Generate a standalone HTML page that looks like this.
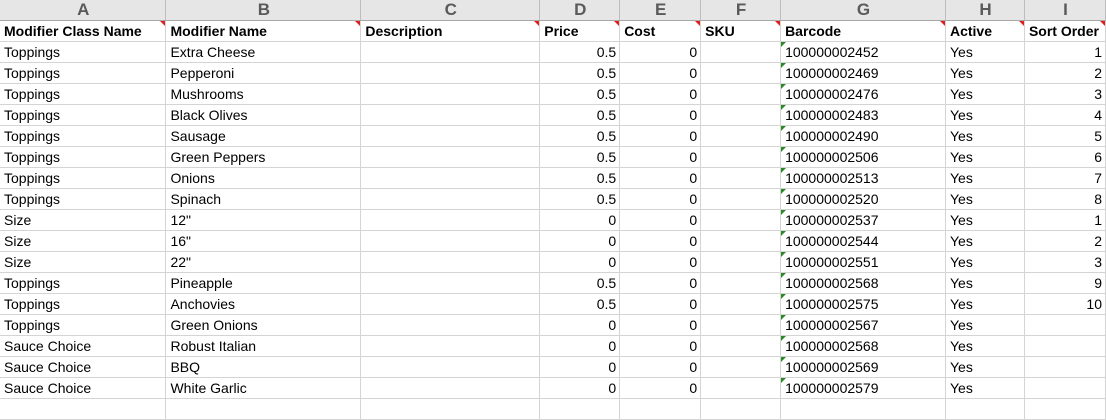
<!DOCTYPE html>
<html><head><style>
body{margin:0;width:1106px;height:402px;overflow:hidden;background:#fff;font-family:"Liberation Sans",Arial,sans-serif;}
table{border-collapse:collapse;table-layout:fixed;position:absolute;left:0;top:0;}
td{height:20px;padding:0 3px 0 4px;border-right:1px solid #d4d4d4;border-bottom:1px solid #d4d4d4;font-size:14px;color:#000;white-space:nowrap;overflow:hidden;position:relative;line-height:20px;}
tr.h td{background:#e6e6e6;color:#5a5a5a;font-weight:bold;font-size:17px;text-align:center;border-right:1px solid #bdbdbd;border-bottom:1px solid #a8a8a8;}
tr.b td{font-weight:bold;font-size:14px;}
.r{text-align:right;}
.rt:after{content:"";position:absolute;right:0;top:0;border-top:5px solid #e02020;border-left:5px solid transparent;}
.g:before{content:"";position:absolute;left:0;top:0;border-top:5px solid #2a8a2a;border-right:5px solid transparent;}
</style></head><body>
<table>
<colgroup><col style="width:166px"><col style="width:195px"><col style="width:179px"><col style="width:80px"><col style="width:81px"><col style="width:80px"><col style="width:165px"><col style="width:79px"><col style="width:81px"></colgroup>
<tr class="h"><td>A</td><td>B</td><td>C</td><td>D</td><td>E</td><td>F</td><td>G</td><td>H</td><td>I</td></tr>
<tr class="b"><td class="rt">Modifier Class Name</td><td class="rt">Modifier Name</td><td class="rt">Description</td><td class="rt">Price</td><td class="rt">Cost</td><td class="rt">SKU</td><td class="rt">Barcode</td><td class="rt">Active</td><td class="rt">Sort Order</td></tr>
<tr><td>Toppings</td><td>Extra Cheese</td><td></td><td class="r">0.5</td><td class="r">0</td><td></td><td class="g">100000002452</td><td>Yes</td><td class="r">1</td></tr>
<tr><td>Toppings</td><td>Pepperoni</td><td></td><td class="r">0.5</td><td class="r">0</td><td></td><td class="g">100000002469</td><td>Yes</td><td class="r">2</td></tr>
<tr><td>Toppings</td><td>Mushrooms</td><td></td><td class="r">0.5</td><td class="r">0</td><td></td><td class="g">100000002476</td><td>Yes</td><td class="r">3</td></tr>
<tr><td>Toppings</td><td>Black Olives</td><td></td><td class="r">0.5</td><td class="r">0</td><td></td><td class="g">100000002483</td><td>Yes</td><td class="r">4</td></tr>
<tr><td>Toppings</td><td>Sausage</td><td></td><td class="r">0.5</td><td class="r">0</td><td></td><td class="g">100000002490</td><td>Yes</td><td class="r">5</td></tr>
<tr><td>Toppings</td><td>Green Peppers</td><td></td><td class="r">0.5</td><td class="r">0</td><td></td><td class="g">100000002506</td><td>Yes</td><td class="r">6</td></tr>
<tr><td>Toppings</td><td>Onions</td><td></td><td class="r">0.5</td><td class="r">0</td><td></td><td class="g">100000002513</td><td>Yes</td><td class="r">7</td></tr>
<tr><td>Toppings</td><td>Spinach</td><td></td><td class="r">0.5</td><td class="r">0</td><td></td><td class="g">100000002520</td><td>Yes</td><td class="r">8</td></tr>
<tr><td>Size</td><td>12"</td><td></td><td class="r">0</td><td class="r">0</td><td></td><td class="g">100000002537</td><td>Yes</td><td class="r">1</td></tr>
<tr><td>Size</td><td>16"</td><td></td><td class="r">0</td><td class="r">0</td><td></td><td class="g">100000002544</td><td>Yes</td><td class="r">2</td></tr>
<tr><td>Size</td><td>22"</td><td></td><td class="r">0</td><td class="r">0</td><td></td><td class="g">100000002551</td><td>Yes</td><td class="r">3</td></tr>
<tr><td>Toppings</td><td>Pineapple</td><td></td><td class="r">0.5</td><td class="r">0</td><td></td><td class="g">100000002568</td><td>Yes</td><td class="r">9</td></tr>
<tr><td>Toppings</td><td>Anchovies</td><td></td><td class="r">0.5</td><td class="r">0</td><td></td><td class="g">100000002575</td><td>Yes</td><td class="r">10</td></tr>
<tr><td>Toppings</td><td>Green Onions</td><td></td><td class="r">0</td><td class="r">0</td><td></td><td class="g">100000002567</td><td>Yes</td><td></td></tr>
<tr><td>Sauce Choice</td><td>Robust Italian</td><td></td><td class="r">0</td><td class="r">0</td><td></td><td class="g">100000002568</td><td>Yes</td><td></td></tr>
<tr><td>Sauce Choice</td><td>BBQ</td><td></td><td class="r">0</td><td class="r">0</td><td></td><td class="g">100000002569</td><td>Yes</td><td></td></tr>
<tr><td>Sauce Choice</td><td>White Garlic</td><td></td><td class="r">0</td><td class="r">0</td><td></td><td class="g">100000002579</td><td>Yes</td><td></td></tr>
<tr><td></td><td></td><td></td><td></td><td></td><td></td><td></td><td></td><td></td></tr>
</table>
</body></html>
